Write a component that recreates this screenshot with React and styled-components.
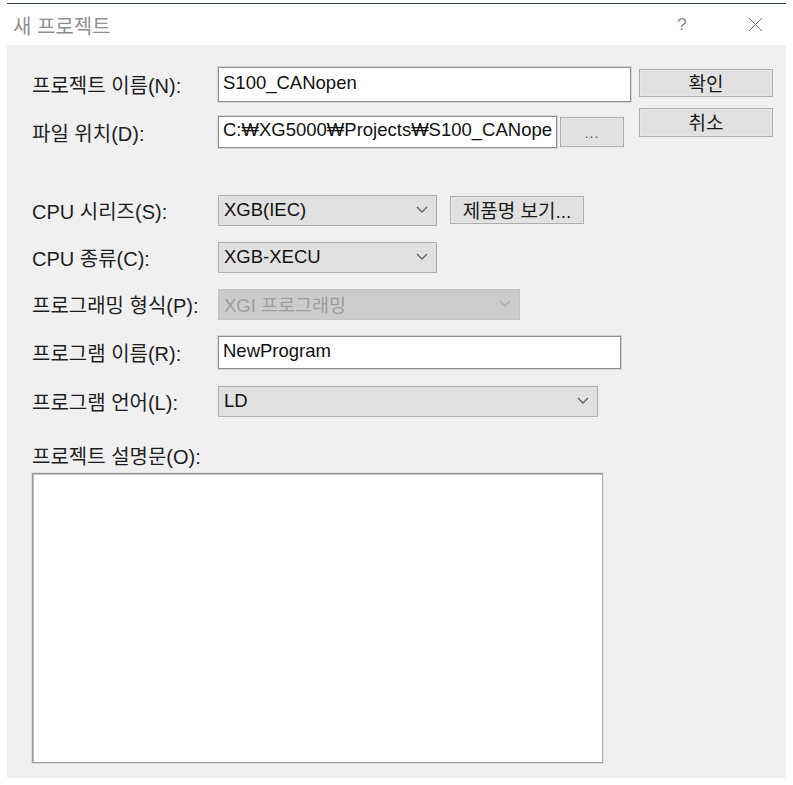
import React from "react";
import styled, { createGlobalStyle } from "styled-components";

const GlobalStyle = createGlobalStyle`
  body {
    margin: 0;
    background: #ffffff;
    font-family: "Liberation Sans", "Noto Sans CJK KR", sans-serif;
  }
`;

const Window = styled.div`
  margin-left: 7px;
  width: 779px;
`;

const TitleBar = styled.div`
  margin-top: 3px;
  height: 41px;
  border-top: 1px solid #33404d;
  display: flex;
  align-items: center;
  padding: 0 21px 0 6px;
  background: #ffffff;
`;

const Title = styled.span`
  flex: 1;
  font-size: 20px;
  color: #909090;
  padding-top: 2px;
`;

const TitleIcon = styled.span`
  display: flex;
  align-items: center;
  justify-content: center;
  width: 20px;
  margin-left: ${props => props.$gap || 0}px;
  color: #8a8a8a;
  font-size: 17px;
  font-weight: 300;
`;

const Body = styled.div`
  background: #f0f0f0;
  height: 733px;
  box-sizing: border-box;
  padding: 22px 0 15px 25px;
  display: flex;
  flex-direction: column;
`;

const Top = styled.div`
  display: flex;
`;

const Form = styled.div`
  display: flex;
  flex-direction: column;
  width: 599px;
`;

const Row = styled.div`
  display: flex;
  align-items: flex-start;
  margin-top: ${props => props.$gap || 0}px;
`;

const Label = styled.div`
  width: 186px;
  flex-shrink: 0;
  height: ${props => props.$h}px;
  display: flex;
  align-items: center;
  font-size: 20px;
  color: #1e1e1e;
  white-space: nowrap;
`;

const TextBox = styled.input`
  box-sizing: border-box;
  width: ${props => props.$w}px;
  height: ${props => props.$h}px;
  margin: 0;
  padding: 0 4px 4px;
  border: 1px solid #8e8e8e;
  box-shadow: 0 0 0 1px #d6d6d6;
  background: #ffffff;
  font-family: "Liberation Sans", "Noto Sans CJK KR", sans-serif;
  font-size: 18.5px;
  color: #111;
  outline: none;
`;

const Button = styled.div`
  box-sizing: border-box;
  width: ${props => props.$w}px;
  height: ${props => props.$h}px;
  margin-left: ${props => props.$ml || 0}px;
  margin-top: ${props => props.$mt || 0}px;
  border: 1px solid #adadad;
  box-shadow: inset 0 0 0 1px #e6e6e6;
  background: #e1e1e1;
  display: flex;
  align-items: center;
  justify-content: center;
  font-size: 19px;
  color: #1a1a1a;
  padding-bottom: 2px;
  flex-shrink: 0;
  white-space: nowrap;
`;

const DotsButton = styled(Button)`
  align-items: flex-end;
  padding-bottom: 5px;
  font-size: 14px;
  color: #555;
  letter-spacing: 1px;
`;

const Combo = styled.div`
  box-sizing: border-box;
  width: ${props => props.$w}px;
  height: 31px;
  border: 1px solid ${props => (props.$disabled ? "#c4c4c4" : "#adadad")};
  background: ${props => (props.$disabled ? "#cccccc" : "#e1e1e1")};
  display: flex;
  align-items: center;
  padding: 0 8px 2px 5px;
  font-size: 18.5px;
  color: ${props => (props.$disabled ? "#9d9d9d" : "#111")};
`;

const ComboText = styled.span`
  flex: 1;
`;

const ButtonColumn = styled.div`
  display: flex;
  flex-direction: column;
  margin-left: 8px;
  margin-top: 2px;
`;

const NoteLabel = styled.div`
  margin-top: 27px;
  height: 22px;
  font-size: 20px;
  color: #1e1e1e;
  display: flex;
  align-items: center;
`;

const Note = styled.textarea`
  box-sizing: border-box;
  margin: 7px 0 0;
  width: 571px;
  height: 290px;
  resize: none;
  border: 1px solid #9a9a9a;
  border-right-color: #b0b0b0;
  box-shadow: inset 1px 1px 0 #bdbdbd, 0 0 0 1px #dedede;
  background: #ffffff;
  outline: none;
`;

const Chevron = ({ color }) => (
  <svg width="12" height="7" viewBox="0 0 12 7">
    <polyline points="1,1 6,6 11,1" fill="none" stroke={color} strokeWidth="1.3" />
  </svg>
);

const Close = () => (
  <svg width="15" height="15" viewBox="0 0 15 15">
    <line x1="1" y1="1" x2="14" y2="14" stroke="#7a7a7a" strokeWidth="1" />
    <line x1="14" y1="1" x2="1" y2="14" stroke="#7a7a7a" strokeWidth="1" />
  </svg>
);

const ComboBox = ({ w, value, disabled }) => (
  <Combo $w={w} $disabled={disabled}>
    <ComboText>{value}</ComboText>
    <Chevron color={disabled ? "#acacac" : "#5e5e5e"} />
  </Combo>
);

const App = () => (
  <>
    <GlobalStyle />
    <Window>
      <TitleBar>
        <Title>새 프로젝트</Title>
        <TitleIcon>?</TitleIcon>
        <TitleIcon $gap={53}>
          <Close />
        </TitleIcon>
      </TitleBar>
      <Body>
        <Top>
          <Form>
            <Row>
              <Label $h={35}>프로젝트 이름(N):</Label>
              <TextBox $w={413} $h={35} readOnly value="S100_CANopen" />
            </Row>
            <Row $gap={14}>
              <Label $h={32}>파일 위치(D):</Label>
              <TextBox $w={339} $h={32} readOnly value="C:₩XG5000₩Projects₩S100_CANopen" />
              <DotsButton $w={64} $h={30} $ml={3} $mt={1}>
                ...
              </DotsButton>
            </Row>
          </Form>
          <ButtonColumn>
            <Button $w={134} $h={28}>확인</Button>
            <Button $w={134} $h={29} $mt={11}>취소</Button>
          </ButtonColumn>
        </Top>
        <Row $gap={47}>
          <Label $h={31}>CPU 시리즈(S):</Label>
          <ComboBox w={219} value="XGB(IEC)" />
          <Button $w={134} $h={28} $ml={13} $mt={1}>제품명 보기...</Button>
        </Row>
        <Row $gap={16}>
          <Label $h={31}>CPU 종류(C):</Label>
          <ComboBox w={219} value="XGB-XECU" />
        </Row>
        <Row $gap={16}>
          <Label $h={31}>프로그래밍 형식(P):</Label>
          <ComboBox w={302} value="XGI 프로그래밍" disabled />
        </Row>
        <Row $gap={16}>
          <Label $h={33}>프로그램 이름(R):</Label>
          <TextBox $w={403} $h={33} readOnly value="NewProgram" />
        </Row>
        <Row $gap={17}>
          <Label $h={31}>프로그램 언어(L):</Label>
          <ComboBox w={380} value="LD" />
        </Row>
        <NoteLabel>프로젝트 설명문(O):</NoteLabel>
        <Note readOnly />
      </Body>
    </Window>
  </>
);

export default App;
